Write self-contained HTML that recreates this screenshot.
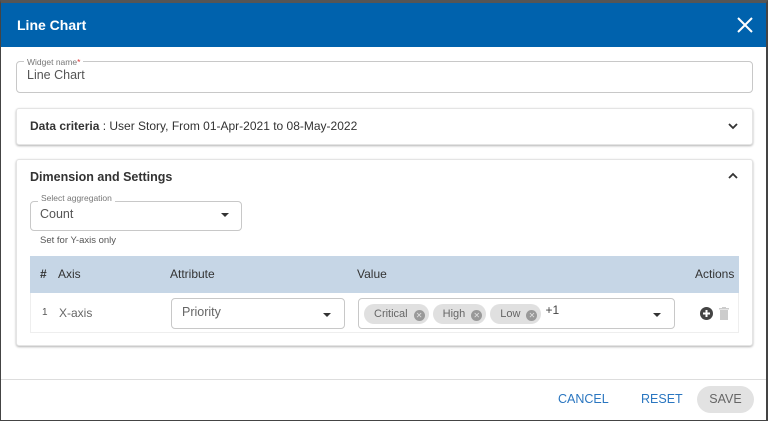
<!DOCTYPE html><html><head><style>
*{box-sizing:border-box;margin:0;padding:0}
body{width:768px;height:421px;overflow:hidden;font-family:"Liberation Sans",sans-serif;background:#fff;position:relative}
.frame{position:absolute;left:0;top:0;width:768px;height:421px;border:1px solid #444;border-top:3px solid #555;border-right:2px solid #444}
.hdr{position:absolute;left:1px;top:3px;width:765px;height:44px;background:#0062ad;color:#fff;font-weight:bold;font-size:14px;line-height:44px;padding-left:16px}
.abs{position:absolute}
.card{position:absolute;background:#fff;border:1px solid #e4e4e4;border-radius:3px;box-shadow:0 1px 2px rgba(0,0,0,.3)}
.fs{position:absolute;border:1px solid #c8c8c8;border-radius:4px;background:#fff}
.lbl{position:absolute;font-size:8.5px;color:#777;background:#fff;padding:0 3px}
.tri{position:absolute;width:0;height:0;border-left:4px solid transparent;border-right:4px solid transparent;border-top:4px solid #333}
.chip{display:inline-block;height:20px;line-height:20px;border-radius:10px;background:#e0e0e0;color:#666;font-size:11px;padding:0 4px 0 10px;margin-right:4px}
.chip i{display:inline-block;width:11px;height:11px;border-radius:6px;background:#999;color:#e0e0e0;font-style:normal;font-size:8px;line-height:11px;text-align:center;margin-left:6px;vertical-align:-1px}
</style></head><body>
<div class="frame"></div>
<div class="hdr">Line Chart</div>
<svg class="abs" style="left:737px;top:17px" width="16" height="16"><path d="M1 1L15 15M15 1L1 15" stroke="#fff" stroke-width="2"/></svg>

<div class="fs" style="left:16px;top:61px;width:737px;height:32px"></div>
<div class="lbl" style="left:24px;top:57px">Widget name<span style="color:#d33">*</span></div>
<div class="abs" style="left:27px;top:68px;font-size:12.5px;color:#555">Line Chart</div>

<div class="card" style="left:16px;top:108px;width:737px;height:37px"></div>
<div class="abs" style="left:30px;top:119px;font-size:12px;color:#333"><b>Data criteria</b> : User Story, From 01-Apr-2021 to 08-May-2022</div>
<svg class="abs" style="left:728px;top:122px" width="10" height="8"><path d="M1 2L5 6L9 2" stroke="#333" stroke-width="1.8" fill="none"/></svg>

<div class="card" style="left:16px;top:159px;width:737px;height:187px"></div>
<div class="abs" style="left:30px;top:170px;font-size:12.5px;font-weight:bold;color:#333">Dimension and Settings</div>
<svg class="abs" style="left:728px;top:172px" width="10" height="8"><path d="M1 6L5 2L9 6" stroke="#333" stroke-width="1.8" fill="none"/></svg>

<div class="fs" style="left:30px;top:201px;width:212px;height:30px"></div>
<div class="lbl" style="left:38px;top:193px">Select aggregation</div>
<div class="abs" style="left:40px;top:207px;font-size:12.5px;color:#555">Count</div>
<div class="tri" style="left:221px;top:213px"></div>
<div class="abs" style="left:40px;top:235px;font-size:9.5px;color:#555">Set for Y-axis only</div>

<div class="abs" style="left:30px;top:256px;width:709px;height:37px;background:#c6d6e6"></div>
<div class="abs" style="left:30px;top:293px;width:709px;height:40px;border:1px solid #eee;border-top:none"></div>
<div class="abs" style="top:267px;left:40px;font-size:12px;font-weight:bold;color:#333">#</div>
<div class="abs" style="top:267px;left:58px;font-size:12px;color:#333">Axis</div>
<div class="abs" style="top:267px;left:170px;font-size:12px;color:#333">Attribute</div>
<div class="abs" style="top:267px;left:357px;font-size:12px;color:#333">Value</div>
<div class="abs" style="top:267px;left:695px;font-size:12px;color:#333">Actions</div>

<div class="abs" style="top:307px;left:42px;font-size:10px;color:#555">1</div>
<div class="abs" style="top:306px;left:59px;font-size:12px;color:#666">X-axis</div>
<div class="fs" style="left:171px;top:298px;width:174px;height:31px"></div>
<div class="abs" style="top:305px;left:182px;font-size:12.5px;color:#666">Priority</div>
<div class="tri" style="left:323px;top:313px"></div>
<div class="fs" style="left:358px;top:298px;width:317px;height:31px"></div>
<div class="abs" style="left:364px;top:303px;white-space:nowrap"><span class="chip">Critical<i>✕</i></span><span class="chip">High<i>✕</i></span><span class="chip">Low<i>✕</i></span><span style="font-size:12px;color:#444;vertical-align:3px">+1</span></div>
<div class="tri" style="left:653px;top:313px"></div>
<svg class="abs" style="left:700px;top:307px" width="13" height="13"><circle cx="6.5" cy="6.5" r="6.5" fill="#444"/><path d="M6.5 3V10M3 6.5H10" stroke="#fff" stroke-width="2"/></svg>
<svg class="abs" style="left:719px;top:307px" width="10" height="13"><rect x="1" y="3" width="8" height="10" fill="#ccc"/><rect x="0" y="1" width="10" height="1.5" fill="#ccc"/><rect x="3" y="0" width="4" height="1.5" fill="#ccc"/></svg>

<div class="abs" style="left:1px;top:379px;width:765px;height:1px;background:#ddd"></div>
<div class="abs" style="left:558px;top:392px;font-size:12.5px;color:#2a76c0">CANCEL</div>
<div class="abs" style="left:641px;top:392px;font-size:12.5px;color:#2a76c0">RESET</div>
<div class="abs" style="left:697px;top:386px;width:57px;height:27px;border-radius:14px;background:#e2e2e2;color:#666;font-size:12.5px;line-height:27px;text-align:center">SAVE</div>
</body></html>
